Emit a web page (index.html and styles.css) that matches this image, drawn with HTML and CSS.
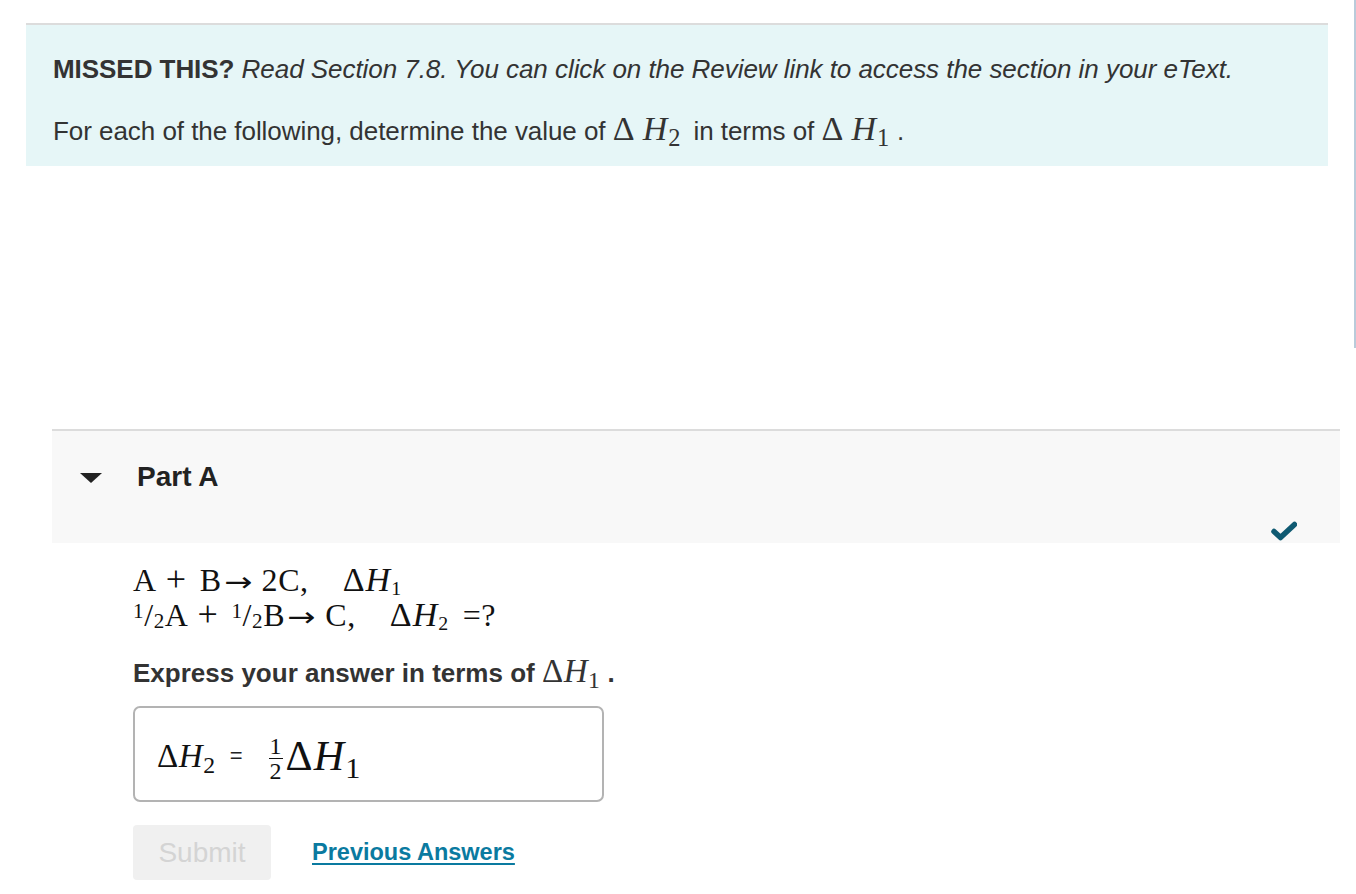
FILE: index.html
```html
<!DOCTYPE html>
<html>
<head>
<meta charset="utf-8">
<link rel="stylesheet" href="styles.css">
</head>
<body>
<div class="page">
  <div class="edge"></div>
  <div class="intro">
    <p class="line1"><b>MISSED THIS?</b> <i>Read Section 7.8. You can click on the Review link to access the section in your eText.</i></p>
    <p class="line2">For each of the following, determine the value of <span class="m"><span class="d">Δ</span> <span class="v">H</span><sub>2</sub></span> <span class="gap"></span>in terms of <span class="m"><span class="d">Δ</span> <span class="v">H</span><sub>1</sub></span> .</p>
  </div>

  <div class="part">
    <div class="part-head">
      <span class="tri"></span>
      <span class="part-title">Part A</span>
      <svg class="check" width="26" height="20" viewBox="0 0 26 20"><path d="M3 10.5 L9.5 16.5 L23.5 3.5" fill="none" stroke="#0f5a72" stroke-width="5.5" stroke-linecap="round" stroke-linejoin="round"/></svg>
    </div>
  </div>

  <div class="body">
    <div class="eq">
      <div>A<span class="op">+</span>B<span class="arr">→</span>2C,<span class="sp"></span><span class="d">Δ</span><span class="v">H</span><sub>1</sub></div>
      <div><span class="fr"><sup>1</sup>/<sub>2</sub></span>A<span class="op">+</span><span class="fr"><sup>1</sup>/<sub>2</sub></span>B<span class="arr">→</span>C,<span class="sp"></span><span class="d">Δ</span><span class="v">H</span><sub>2</sub><span class="eqs">=?</span></div>
    </div>
    <p class="express">Express your answer in terms of <span class="m2"><span class="d">Δ</span><span class="v">H</span><sub>1</sub></span> .</p>
    <div class="answer">
      <span class="lhs"><span class="d">Δ</span><span class="v">H</span><sub>2</sub></span>
      <span class="equals">=</span>
      <span class="frac"><span class="num">1</span><span class="den">2</span></span>
      <span class="rhs"><span class="d">Δ</span><span class="v">H</span><sub>1</sub></span>
    </div>
    <div class="actions">
      <button class="submit">Submit</button>
      <a class="prev" href="#">Previous Answers</a>
    </div>
  </div>
</div>
</body>
</html>
```

FILE: styles.css
```css
html, body { margin: 0; padding: 0; background: #fff; }
body { font-family: "Liberation Sans", Arial, sans-serif; color: #333; }
.page { position: relative; padding-top: 23px; width: 1356px; height: 894px; box-sizing: border-box; overflow: hidden; }
.edge { position: absolute; right: 0; top: 0; width: 2px; height: 348px; background: #b9cbda; }

.intro { margin: 0 28px 0 26px; background: #e6f6f7; border-top: 2px solid #dcdcdc; padding: 29px 27px 21px; height: 143px; box-sizing: border-box; }
.intro p { margin: 0; font-size: 26px; line-height: 31px; letter-spacing: -0.05px; }
.intro .line2 { margin-top: 27px; }
.intro b { font-weight: bold; }
.gap { display: inline-block; width: 5px; }

.m { font-family: "Liberation Serif", "Times New Roman", serif; font-size: 34px; line-height: 1; letter-spacing: 0.8px; }
.d { font-family: "Liberation Serif", "Times New Roman", serif; font-style: normal; }
.v { font-family: "Liberation Serif", "Times New Roman", serif; font-style: italic; }
sub { font-size: 0.72em; line-height: 0; vertical-align: -0.25em; }
sup { font-size: 0.72em; line-height: 0; vertical-align: 0.4em; }

.part { margin: 263px 16px 0 52px; background: #f8f8f8; border-top: 2px solid #dcdcdc; }
.part-head { position: relative; display: flex; align-items: center; height: 112px; box-sizing: border-box; padding: 30px 0 50px 28px; }
.tri { width: 0; height: 0; border-left: 11px solid transparent; border-right: 11px solid transparent; border-top: 10px solid #222; margin-right: 35px; margin-top: 2px; }
.part-title { font-size: 28px; font-weight: bold; color: #222; line-height: 32px; }
.check { position: absolute; right: 43px; bottom: 2px; }

.body { padding-left: 133px; }
.eq { margin-top: 20px; font-family: "Liberation Serif", "Times New Roman", serif; font-size: 32px; line-height: 33px; color: #111; letter-spacing: 0.6px; }
.eq sub { font-size: 0.62em; vertical-align: -0.18em; }
.eq .d, .eq .v { font-size: 34px; letter-spacing: 1px; }
.op { display: inline-block; font-size: 36px; margin: 0 13px 0 9px; }
.arr { display: inline-block; font-family: "DejaVu Sans", sans-serif; font-size: 27px; width: 34px; text-align: center; margin-right: 6px; transform: scaleX(1.25); }
.sp { display: inline-block; width: 34px; }
.fr sup, .fr sub { font-size: 0.66em; }
.fr sub { vertical-align: -0.08em; }
.eqs { margin-left: 14px; }

.express { margin: 22px 0 0; font-size: 26px; font-weight: bold; line-height: 30px; color: #333; }
.m2 { font-family: "Liberation Serif", "Times New Roman", serif; font-size: 33px; font-weight: normal; line-height: 1; letter-spacing: 0.5px; }

.answer { margin-top: 18px; width: 471px; height: 96px; box-sizing: border-box; border: 2px solid #b3b3b3; border-radius: 7px; display: flex; align-items: center; padding: 4px 0 0 22px; color: #111; }
.lhs { font-family: "Liberation Serif", "Times New Roman", serif; font-size: 33px; letter-spacing: 0.6px; }
.equals { font-size: 22px; margin: 0 26px 0 14px; color: #222; }
.frac { display: inline-flex; flex-direction: column; align-items: center; font-family: "Liberation Serif", "Times New Roman", serif; font-size: 24px; line-height: 22px; margin-right: 3px; margin-top: 4px; }
.num { border-bottom: 1px solid #111; padding: 0 1px 1px; }
.den { padding-top: 1px; }
.rhs { font-family: "Liberation Serif", "Times New Roman", serif; font-size: 42px; letter-spacing: 1.2px; }

.actions { margin-top: 23px; display: flex; align-items: center; }
.submit { width: 138px; height: 55px; border: none; border-radius: 4px; background: #f0f0f0; color: #d4d4d4; font-family: "Liberation Sans", Arial, sans-serif; font-size: 28px; padding: 0; }
.prev { margin-left: 41px; font-size: 23.5px; font-weight: bold; color: #0a7aa0; text-decoration: underline; text-underline-offset: 3px; }
```
